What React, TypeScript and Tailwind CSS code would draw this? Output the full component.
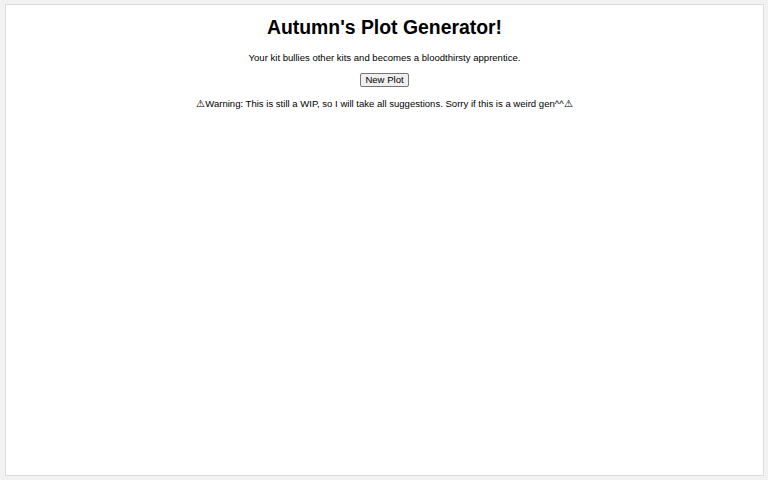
export default function App() {
  return (
    <div className="h-[480px] w-[768px] bg-[#f2f2f2] pt-[4px] pl-[5px] font-['Liberation_Sans',Arial,sans-serif] text-black">
      <div className="h-[472px] w-[759px] border border-[#dcdcdc] bg-white text-center">
        {/* Header */}
        <h1 className="mt-[10px] text-[19.4px] font-bold leading-[24px]">Autumn's Plot Generator!</h1>

        {/* Generated plot */}
        <p className="mt-[13px] text-[9.55px] leading-[12px]">
          Your kit bullies other kits and becomes a bloodthirsty apprentice.
        </p>

        <button className="mt-[9px] rounded-[2px] border border-[#767676] bg-[#efefef] px-[4px] text-[9.55px] leading-[12px]">
          New Plot
        </button>

        <p className="mt-[8px] text-[9.55px] leading-[12px]">
          ⚠Warning: This is still a WIP, so I will take all suggestions. Sorry if this is a weird gen^^⚠
        </p>
      </div>
    </div>
  );
}
